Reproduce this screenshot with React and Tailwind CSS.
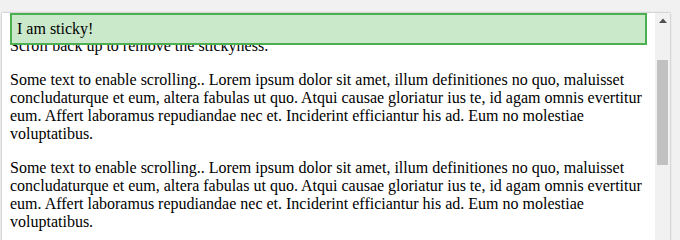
import { useLayoutEffect, useRef } from "react";

const filler =
  "Some text to enable scrolling.. Lorem ipsum dolor sit amet, illum definitiones no quo, maluisset concludaturque et eum, altera fabulas ut quo. Atqui causae gloriatur ius te, id agam omnis evertitur eum. Affert laboramus repudiandae nec et. Inciderint efficiantur his ad. Eum no molestiae voluptatibus.";

function Scrollbar() {
  return (
    <div className="flex w-[15px] shrink-0 flex-col bg-[#f1f1f1]">
      <div className="flex h-[15px] items-center justify-center">
        <svg width="8" height="5" viewBox="0 0 8 5">
          <path d="M0 5 L4 0.5 L8 5 Z" fill="#505050" />
        </svg>
      </div>
      <div className="mx-[2px] mt-[32px] h-[105px] bg-[#c1c1c1]" />
    </div>
  );
}

export default function App() {
  const frameRef = useRef(null);
  const markRef = useRef(null);

  // scroll the frame so the sticky box is stuck, like the screenshot
  useLayoutEffect(() => {
    if (frameRef.current && markRef.current) {
      frameRef.current.scrollTop = markRef.current.offsetTop - 24;
    }
  }, []);

  return (
    <div className="h-[240px] overflow-hidden bg-[#f1f1f1] pt-[13px]">
      <div className="ml-[2px] flex h-[260px] w-[668px] bg-white shadow-[0_0_2px_rgba(0,0,0,0.35)]">
        <div
          ref={frameRef}
          className="relative min-w-0 flex-1 overflow-hidden text-[16px] leading-[normal] text-black font-['Liberation_Serif',serif]"
        >
          <div className="px-2 pb-[400px]">
            <p className="my-4">
              Try to <b>scroll</b> inside this frame to understand how sticky
              positioning works.
            </p>
            <div className="sticky top-0 border-2 border-[#4CAF50] bg-[#cae8ca] p-[5px]">
              I am sticky!
            </div>
            <div>
              <p className="my-4">
                In this example, the sticky element sticks to the top of the
                page (top: 0), when you reach its scroll position.
              </p>
              <p ref={markRef} className="my-4">
                Scroll back up to remove the stickyness.
              </p>
              <p className="my-4">{filler}</p>
              <p className="my-4">{filler}</p>
            </div>
          </div>
        </div>
        <Scrollbar />
      </div>
    </div>
  );
}
